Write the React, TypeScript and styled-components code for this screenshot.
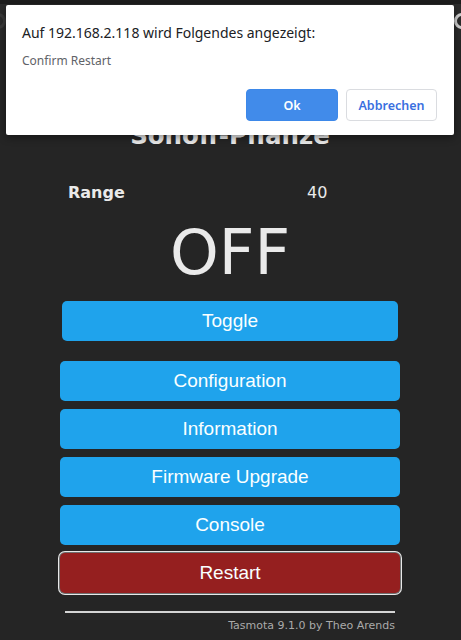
import React from "react";
import styled, { createGlobalStyle } from "styled-components";

const Global = createGlobalStyle`
  html, body { margin: 0; padding: 0; background: #252525; }
  body { width: 461px; height: 640px; overflow: hidden; }
  * { box-sizing: border-box; }
`;

const Page = styled.div`
  position: relative;
  width: 461px;
  height: 640px;
  background: #252525;
  font-family: "DejaVu Sans", Verdana, sans-serif;
  color: #eaeaea;
`;

const TopBand = styled.div`
  position: relative;
  height: 40px;
  background: #2b2b2b;
  border-top: 4px solid #1d1d1d;
`;

const EdgeIcon = styled.div<{ $side: "left" | "right" }>`
  position: absolute;
  top: 9px;
  ${(p) => (p.$side === "right" ? "right: -9px;" : "left: -10px;")}
  width: 16px;
  height: 16px;
  border-radius: 50%;
  border: 3px solid ${(p) => (p.$side === "right" ? "#d0d0d0" : "#3a3a3a")};
  background: #2b2b2b;
`;

const Content = styled.div`
  width: 340px;
  margin: 0 0 0 60px;
  display: flex;
  flex-direction: column;
  text-align: center;
`;

const Module = styled.h3`
  margin: 34px 0 0;
  font-size: 19px;
  line-height: 24px;
  font-weight: bold;
`;

const Title = styled.h2`
  margin: 24px 0 0;
  font-size: 24.5px;
  line-height: 28px;
  font-weight: bold;
  color: #eaeaea;
`;

const SensorRow = styled.div`
  display: grid;
  grid-template-columns: 239px 1fr;
  margin-top: 33px;
  padding-left: 8px;
  font-size: 16px;
  line-height: 20px;
  text-align: left;
`;

const SensorLabel = styled.span`
  font-weight: bold;
`;

const SensorValue = styled.span`
  font-weight: normal;
`;

const State = styled.div`
  margin-top: 19px;
  font-size: 62px;
  line-height: 62px;
  font-weight: normal;
  text-align: center;
  color: #eaeaea;
`;

const ButtonStack = styled.div<{ $inset?: boolean; $top: number }>`
  display: flex;
  flex-direction: column;
  gap: 8px;
  margin-top: ${(p) => p.$top}px;
  padding: 0 ${(p) => (p.$inset ? 2 : 0)}px;
`;

const Btn = styled.button<{ $danger?: boolean }>`
  display: block;
  width: 100%;
  height: 40px;
  border: 0;
  border-radius: 5px;
  background: ${(p) => (p.$danger ? "#951f1f" : "#1fa3ec")};
  color: #faffff;
  font-family: "Liberation Sans", Arial, sans-serif;
  font-size: 19px;
  line-height: 40px;
  padding: 0;
  cursor: pointer;
  box-shadow: ${(p) =>
    p.$danger ? "0 0 0 1px #6f6f6f, 0 0 0 2px #e8e8e8" : "none"};
`;

const Footer = styled.div`
  margin-top: 18px;
  padding: 0 5px;
  text-align: right;
  font-size: 11px;
`;

const Rule = styled.hr`
  margin: 0;
  border: 0;
  height: 2px;
  background: #d4d4d4;
`;

const FooterLink = styled.a`
  display: block;
  margin-top: 6px;
  color: #aaaaaa;
  text-decoration: none;
  line-height: 14px;
`;

const Dialog = styled.div`
  position: absolute;
  top: 5px;
  left: 6px;
  width: 448px;
  height: 130px;
  background: #ffffff;
  border-radius: 2px;
  box-shadow: 0 2px 8px rgba(0, 0, 0, 0.45);
  padding: 18px 16px 0 16px;
  display: flex;
  flex-direction: column;
  font-family: "Noto Sans", "Open Sans", sans-serif;
`;

const DialogTitle = styled.div`
  font-size: 14px;
  line-height: 20px;
  color: #202124;
`;

const DialogMessage = styled.div`
  margin-top: 10px;
  font-size: 12px;
  line-height: 16px;
  color: #5f6368;
`;

const DialogActions = styled.div`
  margin-top: 20px;
  display: flex;
  justify-content: flex-end;
  gap: 8px;
`;

const DialogBtn = styled.button<{ $primary?: boolean }>`
  width: ${(p) => (p.$primary ? 92 : 91)}px;
  height: 32px;
  border-radius: 4px;
  border: 1px solid ${(p) => (p.$primary ? "#3d88e9" : "#dadce0")};
  background: ${(p) => (p.$primary ? "#418bea" : "#ffffff")};
  color: ${(p) => (p.$primary ? "#ffffff" : "#3a6fe0")};
  font-family: "Noto Sans", "Open Sans", sans-serif;
  font-size: 12.5px;
  font-weight: 600;
  padding: 0;
  margin-right: ${(p) => (p.$primary ? 0 : 1)}px;
`;

export default function App() {
  const buttons = ["Configuration", "Information", "Firmware Upgrade", "Console"];
  return (
    <Page>
      <Global />
      <TopBand>
        <EdgeIcon $side="left" />
        <EdgeIcon $side="right" />
      </TopBand>
      <Content>
        <Module>Sonoff Basic Module</Module>
        <Title>Sonoff-Pflanze</Title>
        <SensorRow>
          <SensorLabel>Range</SensorLabel>
          <SensorValue>40</SensorValue>
        </SensorRow>
        <State>OFF</State>
        <ButtonStack $inset $top={17}>
          <Btn>Toggle</Btn>
        </ButtonStack>
        <ButtonStack $top={20}>
          {buttons.map((b) => (
            <Btn key={b}>{b}</Btn>
          ))}
          <Btn $danger>Restart</Btn>
        </ButtonStack>
        <Footer>
          <Rule />
          <FooterLink href="#">Tasmota 9.1.0 by Theo Arends</FooterLink>
        </Footer>
      </Content>
      <Dialog>
        <DialogTitle>Auf 192.168.2.118 wird Folgendes angezeigt:</DialogTitle>
        <DialogMessage>Confirm Restart</DialogMessage>
        <DialogActions>
          <DialogBtn $primary>Ok</DialogBtn>
          <DialogBtn>Abbrechen</DialogBtn>
        </DialogActions>
      </Dialog>
    </Page>
  );
}
